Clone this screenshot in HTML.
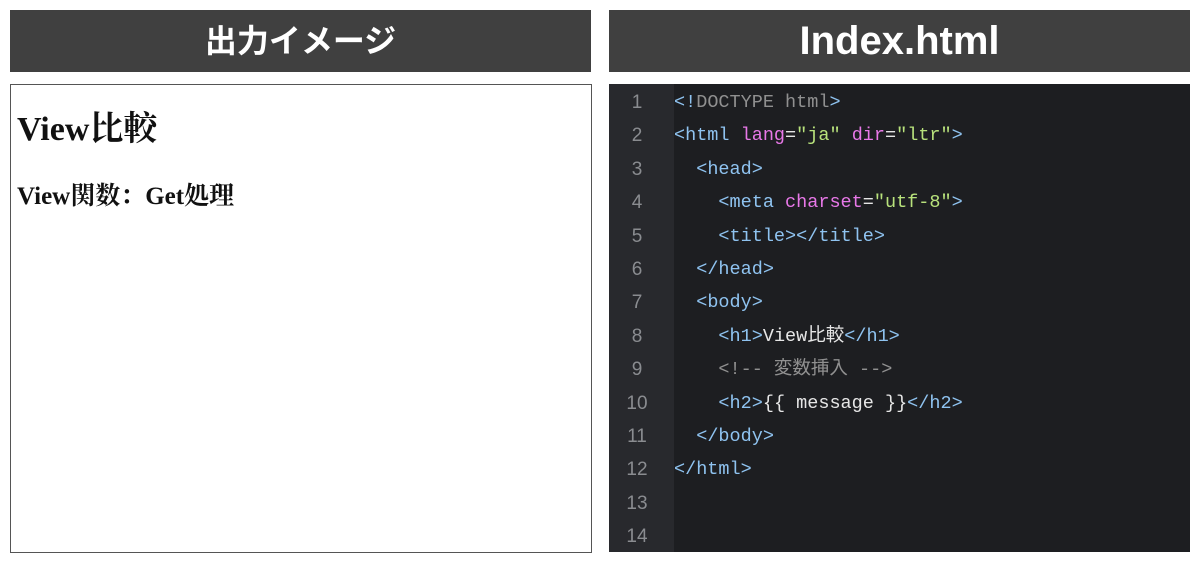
<!DOCTYPE html>
<html><head><meta charset="utf-8"><style>
body{margin:0;width:1200px;height:564px;background:#fff;position:relative;overflow:hidden}
.hd{position:absolute;top:10px;height:62px;background:#404040;color:#fff;font:bold 32px "Liberation Sans","Noto Sans CJK JP",sans-serif;text-align:center;line-height:62px}
.box{position:absolute;left:10px;top:84px;width:580px;height:467px;border:1px solid #555}
.h1{position:absolute;left:17px;top:101px;font:bold 34px "Liberation Serif","Noto Serif CJK SC",serif;color:#111}
.h2{position:absolute;left:17px;top:176px;font:bold 25px "Liberation Serif","Noto Serif CJK SC",serif;color:#111}
.code{position:absolute;left:609px;top:84px;width:581px;height:468px;background:#1d1e21}
.gut{position:absolute;left:0;top:0;width:65px;height:100%;background:#28292d}
.rows{position:absolute;left:0;top:2px;width:100%}
.r{position:relative;height:33.4px;line-height:33.4px}
.ln{position:absolute;left:0;top:0;width:56px;text-align:center;color:#8a8c90;font:19px "Liberation Sans",sans-serif;line-height:33.4px}
.tx{position:absolute;left:65px;top:0;white-space:pre;font:18.5px "Liberation Mono","Noto Sans CJK JP",monospace;color:#e6e6e6;line-height:33.4px;height:33.4px}
.t{color:#8fc3f0}.a{color:#e878e8}.s{color:#b8e27c}.c{color:#909090}
</style></head><body>
<div class="hd" style="left:10px;width:581px">出力イメージ</div>
<div class="hd" style="left:609px;width:581px;font-size:40px">Index.html</div>
<div class="box"></div>
<div class="h1">View比較</div>
<div class="h2">View関数：Get処理</div>
<div class="code"><div class="gut"></div><div class="rows">
<div class="r"><div class="ln">1</div><div class="tx"><span class="t">&lt;!</span><span class="c">DOCTYPE html</span><span class="t">&gt;</span></div></div>
<div class="r"><div class="ln">2</div><div class="tx"><span class="t">&lt;html</span> <span class="a">lang</span>=<span class="s">"ja"</span> <span class="a">dir</span>=<span class="s">"ltr"</span><span class="t">&gt;</span></div></div>
<div class="r"><div class="ln">3</div><div class="tx">  <span class="t">&lt;head&gt;</span></div></div>
<div class="r"><div class="ln">4</div><div class="tx">    <span class="t">&lt;meta</span> <span class="a">charset</span>=<span class="s">"utf-8"</span><span class="t">&gt;</span></div></div>
<div class="r"><div class="ln">5</div><div class="tx">    <span class="t">&lt;title&gt;&lt;/title&gt;</span></div></div>
<div class="r"><div class="ln">6</div><div class="tx">  <span class="t">&lt;/head&gt;</span></div></div>
<div class="r"><div class="ln">7</div><div class="tx">  <span class="t">&lt;body&gt;</span></div></div>
<div class="r"><div class="ln">8</div><div class="tx">    <span class="t">&lt;h1&gt;</span>View比較<span class="t">&lt;/h1&gt;</span></div></div>
<div class="r"><div class="ln">9</div><div class="tx">    <span class="c">&lt;!-- 変数挿入 --&gt;</span></div></div>
<div class="r"><div class="ln">10</div><div class="tx">    <span class="t">&lt;h2&gt;</span>{{ message }}<span class="t">&lt;/h2&gt;</span></div></div>
<div class="r"><div class="ln">11</div><div class="tx">  <span class="t">&lt;/body&gt;</span></div></div>
<div class="r"><div class="ln">12</div><div class="tx"><span class="t">&lt;/html&gt;</span></div></div>
<div class="r"><div class="ln">13</div></div>
<div class="r"><div class="ln">14</div></div>
</div></div>
</body></html>
